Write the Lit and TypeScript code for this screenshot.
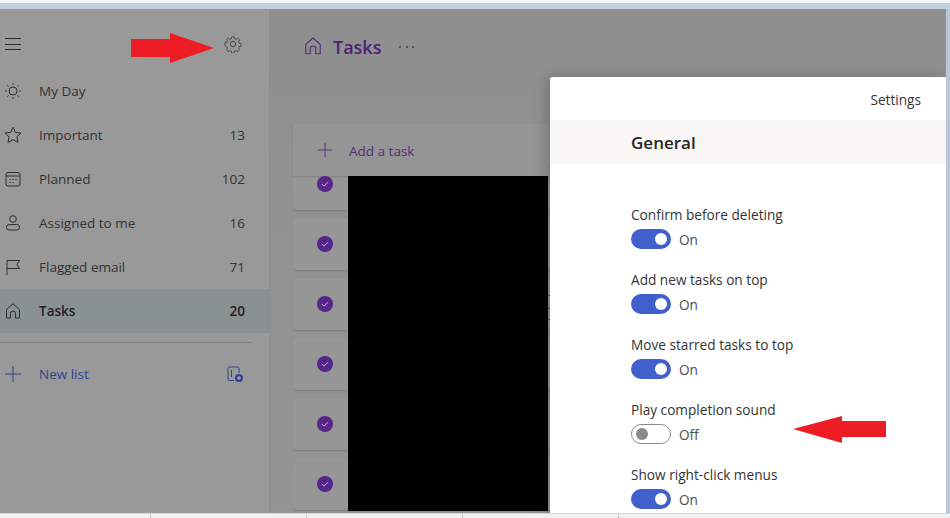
import { LitElement, html, css, svg } from "lit";
import { customElement } from "lit/decorators.js";

const ico = (body: unknown, cls = "ico", w = 18, h = 18) => html`<svg class=${cls} width=${w} height=${h} viewBox="0 0 18 18" fill="none" stroke="currentColor" stroke-width="1">${body}</svg>`;

const sun = svg`<circle cx="9" cy="9" r="4"/><path d="M9 1v1.800M9 15.200V17M1 9h1.800M15.200 9H17M3.300 3.300l1.200 1.200M13.500 13.500l1.200 1.200M3.300 14.700l1.200-1.200M13.500 4.500l1.200-1.200"/>`;
const star = svg`<path d="M9 1.200l2.400 5.200 5.600.6-4.100 3.800 1.100 5.600L9 13.600l-5 2.800 1.100-5.600L1 7l5.600-.6z" stroke-linejoin="round"/>`;
const cal = svg`<rect x="2" y="2.500" width="14" height="13.500" rx="2"/><path d="M2 6h14"/><path d="M5.500 9.500h1.200M8.400 9.500h1.200M11.300 9.500h1.200M5.500 12.500h1.200M8.400 12.500h1.200" stroke-width="1.200"/>`;
const person = svg`<circle cx="9" cy="5" r="3.300"/><rect x="2.500" y="10.500" width="13" height="5.500" rx="2.700"/>`;
const flag = svg`<path d="M3 17V2.500h12.500L13 6.500l2.500 4H3"/>`;
const home = svg`<path d="M2.500 16V7.500L9 1.800l6.500 5.700V16h-4v-4.500a2.500 2.500 0 0 0-5 0V16z" stroke-linejoin="round"/>`;
const plus = svg`<path d="M9 1v16M1 9h16"/>`;

const nav = [
  { i: sun, t: "My Day", n: "" },
  { i: star, t: "Important", n: "13" },
  { i: cal, t: "Planned", n: "102" },
  { i: person, t: "Assigned to me", n: "16" },
  { i: flag, t: "Flagged email", n: "71" },
  { i: home, t: "Tasks", n: "20", on: true },
];

const settings = [
  { t: "Confirm before deleting", on: true },
  { t: "Add new tasks on top", on: true },
  { t: "Move starred tasks to top", on: true },
  { t: "Play completion sound", on: false },
  { t: "Show right-click menus", on: true },
];

@customElement("app-root")
export class AppRoot extends LitElement {
  static styles = css`
    :host { display: block; width: 950px; height: 518px; overflow: hidden; background: #fff; font-family: "Open Sans", "Noto Sans", sans-serif; font-size: 13.500px; color: #333; }
    .page { display: flex; flex-direction: column; height: 518px; position: relative; }
    .top-white { height: 3px; background: #f6f7f8; flex: none; }
    .top-blue { height: 6px; background: #c5cfe3; flex: none; }
    .mid { display: flex; height: 504px; flex: none; }
    .edge { width: 4px; background: #b9c6dc; flex: none; }
    .bottom { height: 5px; flex: none; background: #f1f1f1; border-top: 1px solid #d8d8d8; box-sizing: border-box; display: flex; }
    .bottom i { width: 156px; flex: none; border-right: 1px solid #c4c4c4; box-sizing: border-box; }
    .bottom i:first-child { width: 151px; }
    .window { width: 946px; display: flex; position: relative; overflow: hidden; background: #939393; }
    .side { width: 270px; flex: none; background: #999; border-right: 1px solid #8f8f8f; box-sizing: border-box; display: flex; flex-direction: column; }
    .side-top { height: 60px; flex: none; box-sizing: border-box; display: flex; align-items: center; justify-content: space-between; padding: 10px 27px 0 5px; }
    .ico { flex: none; color: #2e2e2e; }
    .gear { color: #40464a; }
    .nav { height: 44px; flex: none; display: flex; align-items: center; padding: 0 24px 0 4px; }
    .nav .lbl { margin-left: 17px; flex: 1; color: #333; }
    .nav .n { color: #333; }
    .nav.on { background: #8a9193; }
    .nav.on .lbl, .nav.on .n { font-weight: 600; color: #222; }
    .sep { height: 1px; background: #858585; margin: 9px 17px 0 0; flex: none; }
    .newlist { height: 62px; flex: none; display: flex; align-items: center; padding: 0 25px 0 4px; color: #32408f; }
    .newlist .ico { color: #32408f; }
    .newlist .lbl { margin-left: 17px; flex: 1; }
    .main { flex: 1; min-width: 0; display: flex; flex-direction: column; padding-left: 23px; background: linear-gradient(180deg, #8f8f8f 0%, #949494 100%); }
    .title { height: 115px; flex: none; display: flex; align-items: flex-start; padding: 27px 0 0 10px; box-sizing: border-box; color: #57267f; }
    .title .ico { color: #57267f; }
    .title h1 { margin: -1px 0 0 10px; font-size: 18px; line-height: 24px; font-weight: 600; color: #4f2078; }
    .dots { margin: 10px 0 0 18px; width: 15px; height: 2px; display: flex; justify-content: space-between; }
    .dots b { width: 2px; height: 2px; border-radius: 1px; background: #444; }
    .add { height: 52px; flex: none; display: flex; align-items: center; padding-left: 24px; background: #959595; border-radius: 4px 4px 0 0; box-shadow: 0 1px 2px rgba(0,0,0,.14); position: relative; z-index: 1; color: #4f2f75; }
    .add .ico { color: #57267f; }
    .add span { margin: 1px 0 0 16px; }
    .list { flex: 1; overflow: hidden; display: flex; flex-direction: column; gap: 8px; }
    .card { height: 52px; flex: none; border-radius: 4px; background: #969696; box-shadow: 0 1px 2px rgba(0,0,0,.16); display: flex; align-items: center; padding-left: 24px; }
    .card:first-child { margin-top: -18px; }
    .check { width: 16px; height: 16px; border-radius: 50%; background: #57258a; display: flex; align-items: center; justify-content: center; }
    .redact { position: absolute; z-index: 2; left: 348px; top: 167px; width: 200px; height: 335px; background: #000; }
    .panel { position: absolute; z-index: 3; left: 550px; top: 68px; width: 396px; height: 436px; background: #fff; border-radius: 3px 0 0 0; box-shadow: -3px 0 14px rgba(0,0,0,.22); display: flex; flex-direction: column; overflow: hidden; font-size: 13.650px; }
    .p-head { height: 43px; flex: none; display: flex; align-items: center; justify-content: flex-end; padding: 2px 25px 0 0; box-sizing: border-box; color: #333; }
    .p-band { height: 44px; flex: none; background: #f8f7f5; display: flex; align-items: center; padding-left: 81px; }
    .p-band h2 { margin: 0; font-size: 17px; font-weight: 600; color: #262626; }
    .p-body { padding: 41px 0 0 81px; display: flex; flex-direction: column; gap: 21px; }
    .set { display: flex; flex-direction: column; gap: 4px; }
    .set .t { line-height: 20px; height: 20px; color: #333; }
    .row { display: flex; align-items: center; gap: 8px; height: 20px; color: #4d4d4d; }
    .tog { width: 40px; height: 20px; box-sizing: border-box; border-radius: 10px; display: flex; align-items: center; }
    .tog.on { background: #4260cc; justify-content: flex-end; padding-right: 4px; }
    .tog.off { border: 1px solid #8a8a8a; background: #fff; padding-left: 4px; }
    .tog b { width: 12px; height: 12px; border-radius: 50%; display: block; }
    .tog.on b { background: #fff; }
    .tog.off b { background: #8a8a8a; }
    .arrow { position: absolute; z-index: 4; left: 0; top: 0; pointer-events: none; }
    .tick { position: absolute; z-index: 2; left: 548px; width: 2px; height: 1px; background: #444; }
  `;

  render() {
    return html`<div class="page">
      <div class="top-white"></div>
      <div class="top-blue"></div>
      <div class="mid">
        <div class="window">
          <aside class="side">
            <div class="side-top">
              <svg class="ico" width="17" height="14" viewBox="0 0 17 14" stroke="currentColor" stroke-width="1"><path d="M0 1.500h16M0 7.500h16M0 12.500h16"/></svg>
              ${ico(svg`<circle cx="9" cy="9" r="2.700"/><path d="M7.600 1h2.800l.5 2.200 1.500.6 1.900-1.200 2 2-1.200 1.900.6 1.500 2.300.5v3l-2.300.5-.6 1.500 1.200 1.900-2 2-1.900-1.200-1.500.6-.5 2.300H7.600l-.5-2.300-1.500-.6-1.900 1.200-2-2 1.200-1.900-.6-1.500L0 10.500v-3l2.300-.5.6-1.500L1.700 4.600l2-2 1.900 1.200 1.500-.6z" transform="translate(.9 .9) scale(.9)"/>`, "ico gear")}
            </div>
            ${nav.map((n) => html`<div class="nav ${n.on ? "on" : ""}">${ico(n.i)}<span class="lbl">${n.t}</span><span class="n">${n.n}</span></div>`)}
            <div class="sep"></div>
            <div class="newlist">
              ${ico(plus)}<span class="lbl">New list</span>
              <svg class="ico" width="17" height="17" viewBox="0 0 17 17" fill="none" stroke="currentColor"><path d="M7 14.500H2.500a1.500 1.500 0 0 1-1.500-1.500V2.500A1.500 1.500 0 0 1 2.500 1h8A1.500 1.500 0 0 1 12 2.500V7"/><path d="M4.500 4v7"/><circle cx="12" cy="12" r="4" fill="currentColor" stroke="none"/><path d="M12 10v4M10 12h4" stroke="#bbb"/></svg>
            </div>
          </aside>
          <main class="main">
            <div class="title">
              ${ico(home, "ico", 20, 20)}
              <h1>Tasks</h1>
              <div class="dots"><b></b><b></b><b></b></div>
            </div>
            <div class="add">${ico(plus, "ico", 16, 16)}<span>Add a task</span></div>
            <div class="list">
              ${[0, 1, 2, 3, 4, 5].map(() => html`<div class="card"><div class="check"><svg width="10" height="10" viewBox="0 0 10 10" fill="none" stroke="#c9bcd6" stroke-width="1"><path d="M2 5.200l2 2 4-4"/></svg></div></div>`)}
            </div>
          </main>
          <div class="redact"></div>
          <div class="tick" style="top:286px"></div>
          <div class="tick" style="top:299px"></div>
          <div class="tick" style="top:310px"></div>
          <section class="panel">
            <div class="p-head">Settings</div>
            <div class="p-band"><h2>General</h2></div>
            <div class="p-body">
              ${settings.map((s) => html`<div class="set"><div class="t">${s.t}</div><div class="row"><div class="tog ${s.on ? "on" : "off"}"><b></b></div><span>${s.on ? "On" : "Off"}</span></div></div>`)}
            </div>
          </section>
        </div>
        <div class="edge"></div>
      </div>
      <div class="bottom"><i></i><i></i><i></i><i></i></div>
      <svg class="arrow" width="950" height="518" viewBox="0 0 950 518">
        <path fill="#ee1c25" d="M131 39H170V33L214 48 170 63V57H131Z"/>
        <path fill="#ee1c25" d="M793 429 842 416V421H886V437H842V443Z"/>
      </svg>
    </div>`;
  }
}
